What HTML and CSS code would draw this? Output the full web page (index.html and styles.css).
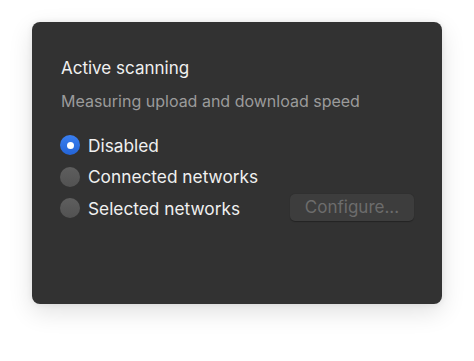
FILE: index.html
```html
<!DOCTYPE html>
<html>
<head>
<meta charset="utf-8">
<link rel="stylesheet" href="styles.css">
</head>
<body>
<div class="panel">
  <div class="title">Active scanning</div>
  <div class="subtitle">Measuring upload and download speed</div>
  <div class="options">
    <div class="option">
      <span class="radio on"></span>
      <span class="label">Disabled</span>
    </div>
    <div class="option">
      <span class="radio"></span>
      <span class="label">Connected networks</span>
    </div>
    <div class="option">
      <span class="radio"></span>
      <span class="label">Selected networks</span>
      <button class="configure">Configure...</button>
    </div>
  </div>
</div>
</body>
</html>
```
FILE: styles.css
```css
html, body {
  margin: 0;
  padding: 0;
  background: #ffffff;
}
body {
  width: 474px;
  height: 361px;
  padding: 22px 32px 0 32px;
  box-sizing: border-box;
  font-family: Inter, "Liberation Sans", sans-serif;
}
.panel {
  width: 410px;
  height: 282px;
  box-sizing: border-box;
  background: #323232;
  border-radius: 8px;
  box-shadow: 0 8px 24px rgba(0,0,0,0.12), 0 0 6px rgba(0,0,0,0.08);
  padding: 36px 28px 0 28px;
}
.title {
  color: #f0f0f0;
  font-size: 17px;
  line-height: 20px;
  padding-left: 1px;
}
.subtitle {
  color: #9b9b9b;
  font-size: 16px;
  line-height: 20px;
  margin-top: 13px;
  padding-left: 1px;
}
.options {
  margin-top: 24px;
  display: flex;
  flex-direction: column;
  gap: 11.7px;
}
.option {
  display: flex;
  align-items: center;
  height: 20px;
}
.radio {
  width: 20px;
  height: 20px;
  border-radius: 50%;
  background: linear-gradient(#5e5e5e, #525252);
  flex: none;
  position: relative;
}
.radio.on {
  background: linear-gradient(#3a7ff0, #2464d6);
}
.radio.on::after {
  content: "";
  position: absolute;
  left: 6.5px;
  top: 6.5px;
  width: 7px;
  height: 7px;
  border-radius: 50%;
  background: #ffffff;
}
.label {
  color: #f0f0f0;
  font-size: 17.3px;
  margin-left: 8px;
}
.configure {
  margin-left: auto;
  width: 124px;
  height: 27px;
  border: none;
  border-radius: 5px;
  background: #3d3d3d;
  box-shadow: 0 0.5px 1px rgba(0,0,0,0.3);
  color: #6c6c6c;
  font-family: Inter, "Liberation Sans", sans-serif;
  font-size: 17px;
  padding: 0;
  position: relative;
  top: -1px;
}
```
